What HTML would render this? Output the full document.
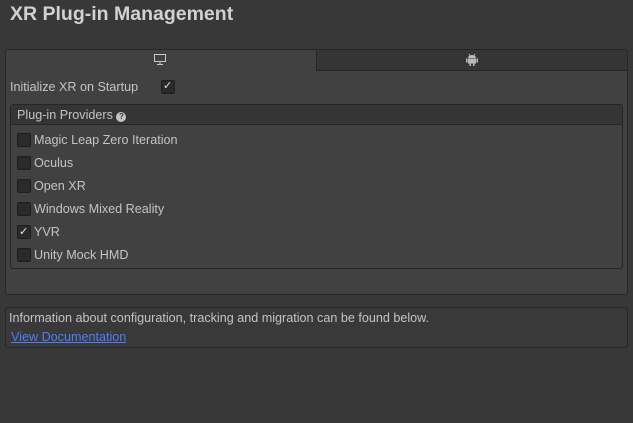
<!DOCTYPE html>
<html><head><style>
*{box-sizing:border-box;margin:0;padding:0}
body{width:633px;height:423px;background:#383838;font-family:"Liberation Sans",sans-serif;color:#c4c4c4;font-size:12.6px;position:relative;overflow:hidden}
.abs{position:absolute}
.title{left:10px;top:3px;font-size:19.5px;font-weight:bold;color:#d2d2d2}
.panel{left:5px;top:49px;width:623px;height:246px;background:#414141;border:1px solid #262626;border-radius:3px}
.tab2{left:316px;top:49px;width:312px;height:22px;background:#353535;border:1px solid #262626;border-top-right-radius:3px}
.cb{width:14px;height:14px;background:#2a2a2a;border:1px solid #1e1e1e;border-radius:2px}
.prov{left:10px;top:104px;width:613px;height:165px;border:1px solid #262626;border-radius:3px;background:#414141}
.ph{height:20px;background:#353535;border-bottom:1px solid #262626;padding:3px 0 0 6px}
.row{position:absolute;left:6px;height:16px;line-height:16px}
.row .cb{position:absolute;left:0;top:1px}
.row span{position:absolute;left:17px;white-space:nowrap}
.info{left:5px;top:307px;width:623px;height:41px;border:1px solid #262626;border-radius:3px;background:#393939}
</style></head><body>
<div class="abs title">XR Plug-in Management</div>
<div class="abs panel"></div>
<div class="abs tab2"></div>
<svg class="abs" style="left:153px;top:53px" width="14" height="13" viewBox="0 0 14 13"><rect x="1.5" y="1.5" width="11" height="7" fill="none" stroke="#c8c8c8"/><path d="M7 9v2M4 11.5h6" stroke="#c8c8c8"/></svg>
<svg class="abs" style="left:466px;top:53px" width="12" height="14" viewBox="0 0 12 14"><path d="M3 1l1 1.5M9 1l-1 1.5" stroke="#bbb"/><path d="M2 5a4 3 0 0 1 8 0z" fill="#bbb"/><rect x="2" y="5.5" width="8" height="5" fill="#bbb"/><rect x="0" y="5.5" width="1.5" height="4" fill="#bbb"/><rect x="10.5" y="5.5" width="1.5" height="4" fill="#bbb"/><rect x="3.5" y="10" width="1.5" height="3" fill="#bbb"/><rect x="7" y="10" width="1.5" height="3" fill="#bbb"/></svg>
<div class="abs" style="left:10px;top:80px">Initialize XR on Startup</div>
<div class="abs cb" style="left:161px;top:80px"></div>
<div class="abs" style="left:163px;top:79px;color:#e0e0e0;font-size:11px">✓</div>
<div class="abs prov">
<div class="ph">Plug-in Providers <span style="display:inline-block;width:10px;height:10px;border-radius:50%;background:#c4c4c4;color:#353535;font-size:8px;font-weight:bold;text-align:center;line-height:10px;vertical-align:0">?</span></div>
<div class="row" style="top:27px"><div class="cb"></div><span>Magic Leap Zero Iteration</span></div>
<div class="row" style="top:50px"><div class="cb"></div><span>Oculus</span></div>
<div class="row" style="top:73px"><div class="cb"></div><span>Open XR</span></div>
<div class="row" style="top:96px"><div class="cb"></div><span>Windows Mixed Reality</span></div>
<div class="row" style="top:119px"><div class="cb"></div><b style="position:absolute;left:2px;top:0;font-weight:normal;color:#e8e8e8;font-size:11px">✓</b><span>YVR</span></div>
<div class="row" style="top:142px"><div class="cb"></div><span>Unity Mock HMD</span></div>
</div>
<div class="abs info">
<div style="position:absolute;left:3px;top:3px;white-space:nowrap">Information about configuration, tracking and migration can be found below.</div>
<div style="position:absolute;left:5px;top:22px;color:#4c7eff;text-decoration:underline">View Documentation</div>
</div>
</body></html>
